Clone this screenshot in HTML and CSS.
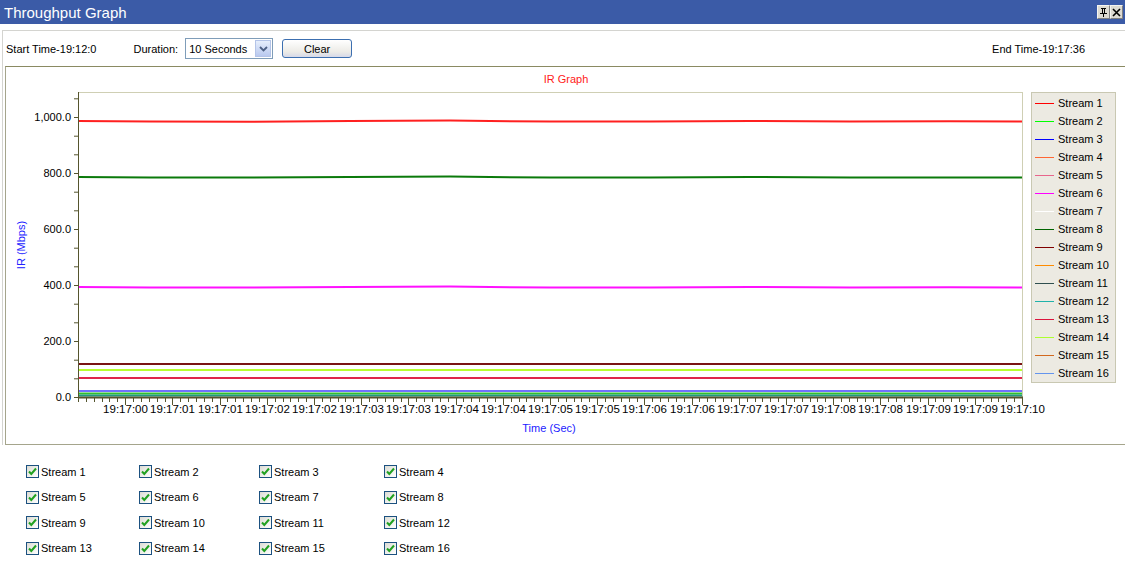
FILE: index.html
```html
<!DOCTYPE html>
<html lang="en">
<head>
    <meta charset="UTF-8">
    <title>Throughput Graph</title>
    <link rel="stylesheet" href="styles.css">
</head>
<body>
    <div class="titlebar">
        <span class="title">Throughput Graph</span>
        <div class="win-buttons">
            <span class="win-btn">
                <svg width="11" height="11" viewBox="0 0 11 11"><path d="M3 1h5v1H7v4h2v1H6v3H5V7H2V6h2V2H3z M5 2v4h1V2z" fill="#000"/></svg>
            </span>
            <span class="win-btn">
                <svg width="11" height="11" viewBox="0 0 11 11"><path d="M2 2L9 9M9 2L2 9" stroke="#000" stroke-width="1.6"/></svg>
            </span>
        </div>
    </div>

    <div class="panel">
        <div class="toolbar">
            <span class="start-time">Start Time-19:12:0</span>
            <span class="duration-label">Duration:</span>
            <div class="select">
                <span class="select-text">10 Seconds</span>
                <span class="select-arrow">
                    <svg width="9" height="6" viewBox="0 0 9 6"><path d="M1 1l3.5 3.5L8 1" stroke="#4d6185" stroke-width="1.8" fill="none"/></svg>
                </span>
            </div>
            <button class="clear-btn">Clear</button>
            <span class="end-time">End Time-19:17:36</span>
        </div>

        <div class="chart-panel">
            <svg class="chart" width="1119" height="377" viewBox="6 67 1119 377">
                <text x="566" y="83" class="chart-title" text-anchor="middle">IR Graph</text>

                <rect x="78.5" y="92.5" width="944" height="305" fill="#fff" stroke="#cfcfb4"/>

                <!-- data -->
                <g fill="none" stroke-width="2">
                    <polyline stroke="#ff2020" points="78,121 150,121.6 250,121.8 350,121 450,120.6 550,121.6 650,121.6 750,121 850,121.6 950,121.2 1022,121.6"/>
                    <polyline stroke="#0b7a0b" points="78,177 150,177.5 250,177.6 350,177 450,176.6 550,177.6 650,177.5 750,177 850,177.6 950,177.4 1022,177.6"/>
                    <polyline stroke="#ff10ff" points="78,287 150,287.6 250,287.6 350,287 450,286.6 550,287.6 650,287.6 750,287 850,287.6 950,287.2 1022,287.6"/>
                    <line x1="78" y1="364" x2="1022" y2="364" stroke="#7a1414"/>
                    <line x1="78" y1="370" x2="1022" y2="370" stroke="#b8ff30"/>
                    <line x1="78" y1="378" x2="1022" y2="378" stroke="#e0264a"/>
                    <line x1="78" y1="391" x2="1022" y2="391" stroke="#7070ff"/>
                    <line x1="78" y1="393.5" x2="1022" y2="393.5" stroke="#30c030"/>
                    <line x1="78" y1="395.5" x2="1022" y2="395.5" stroke="#209a80"/>
                </g>

                <!-- y axis -->
                <g stroke="#55552e" stroke-width="1">
                    <line x1="78.5" y1="92" x2="78.5" y2="398"/>
                    <line x1="74" y1="397.5" x2="78" y2="397.5"/>
                    <line x1="74" y1="378.8" x2="78" y2="378.8"/>
                    <line x1="74" y1="360.2" x2="78" y2="360.2"/>
                    <line x1="74" y1="341.5" x2="78" y2="341.5"/>
                    <line x1="74" y1="322.8" x2="78" y2="322.8"/>
                    <line x1="74" y1="304.2" x2="78" y2="304.2"/>
                    <line x1="74" y1="285.5" x2="78" y2="285.5"/>
                    <line x1="74" y1="266.8" x2="78" y2="266.8"/>
                    <line x1="74" y1="248.2" x2="78" y2="248.2"/>
                    <line x1="74" y1="229.5" x2="78" y2="229.5"/>
                    <line x1="74" y1="210.8" x2="78" y2="210.8"/>
                    <line x1="74" y1="192.2" x2="78" y2="192.2"/>
                    <line x1="74" y1="173.5" x2="78" y2="173.5"/>
                    <line x1="74" y1="154.8" x2="78" y2="154.8"/>
                    <line x1="74" y1="136.2" x2="78" y2="136.2"/>
                    <line x1="74" y1="117.5" x2="78" y2="117.5"/>
                    <line x1="74" y1="98.8" x2="78" y2="98.8"/>
                </g>
                <g class="axis-label" text-anchor="end">
                    <text x="71" y="401">0.0</text>
                    <text x="71" y="345">200.0</text>
                    <text x="71" y="289">400.0</text>
                    <text x="71" y="233">600.0</text>
                    <text x="71" y="177">800.0</text>
                    <text x="71" y="121">1,000.0</text>
                </g>
                <text class="axis-title" transform="translate(25 245) rotate(-90)" text-anchor="middle">IR (Mbps)</text>

                <!-- x axis -->
                <line x1="78" y1="397.5" x2="1023" y2="397.5" stroke="#55552e" stroke-width="2"/>
                <g id="xticks" stroke="#55552e" stroke-width="1"></g>
                <g id="xlabels" class="x-label" text-anchor="middle"></g>
                <text class="axis-title" x="549" y="432" text-anchor="middle">Time (Sec)</text>

                <!-- legend -->
                <rect x="1031.5" y="92.5" width="84" height="290" fill="#eceae2" stroke="#c9c8b2"/>
                <g id="legend" class="legend-text"></g>
            </svg>
        </div>
    </div>

    <div class="streams" id="streams"></div>

    <script>
        let legendColors = ["#ff0000", "#00ff00", "#0000ff", "#ff6633", "#e8668c", "#ff00ff", "#ffffff", "#006400",
            "#800000", "#ff8c00", "#2f4f4f", "#20b2aa", "#dc143c", "#adff2f", "#d2691e", "#6495ed"];
        let ns = "http://www.w3.org/2000/svg";

        // legend entries
        let legend = document.getElementById("legend");
        legendColors.forEach((c, i) => {
            let y = 103 + i * 18;
            let line = document.createElementNS(ns, "line");
            line.setAttribute("x1", 1035); line.setAttribute("x2", 1054);
            line.setAttribute("y1", y + 0.5); line.setAttribute("y2", y + 0.5);
            line.setAttribute("stroke", c);
            legend.appendChild(line);
            let t = document.createElementNS(ns, "text");
            t.setAttribute("x", 1058); t.setAttribute("y", y + 4);
            t.textContent = "Stream " + (i + 1);
            legend.appendChild(t);
        });

        // x ticks and labels
        let labels = ["19:17:00", "19:17:01", "19:17:01", "19:17:02", "19:17:02", "19:17:03", "19:17:03",
            "19:17:04", "19:17:04", "19:17:05", "19:17:05", "19:17:06", "19:17:06", "19:17:07", "19:17:07",
            "19:17:08", "19:17:08", "19:17:09", "19:17:09", "19:17:10"];
        let step = (1022 - 78) / 20;
        let ticks = document.getElementById("xticks");
        let xl = document.getElementById("xlabels");
        for (let k = 0; k <= 120; k++) {
            let x = Math.round(78 + k * step / 6) + 0.5;
            let major = k % 6 === 0 && k > 0;
            let l = document.createElementNS(ns, "line");
            l.setAttribute("x1", x); l.setAttribute("x2", x);
            l.setAttribute("y1", 398); l.setAttribute("y2", major ? 405 : 402);
            ticks.appendChild(l);
            if (major) {
                let t = document.createElementNS(ns, "text");
                t.setAttribute("x", x); t.setAttribute("y", 413);
                t.textContent = labels[k / 6 - 1];
                xl.appendChild(t);
            }
        }

        // stream checkboxes
        let streams = document.getElementById("streams");
        for (let i = 1; i <= 16; i++) {
            let item = document.createElement("label");
            item.className = "stream-item";
            item.innerHTML = `<span class="check"><svg width="11" height="11" viewBox="0 0 11 11"><path d="M2 5.5l2.3 2.5L9 2.5" stroke="#21a121" stroke-width="2" fill="none"/></svg></span>Stream ${i}`;
            streams.appendChild(item);
        }
    </script>
</body>
</html>
```

FILE: styles.css
```css
body {
    margin: 0;
    padding: 0;
    background: white;
    font-family: "Liberation Sans", Arial, sans-serif;
    font-size: 11px;
    color: black;
    width: 1125px;
    overflow: hidden;
}
.titlebar {
    height: 24px;
    background: #3b5ba7;
    display: flex;
    align-items: center;
    justify-content: space-between;
}
.title {
    color: white;
    font-size: 15px;
    padding-left: 4px;
}
.win-buttons {
    display: flex;
    gap: 0;
    padding-right: 2px;
}
.win-btn {
    width: 13px;
    height: 14px;
    background: #dcdad2;
    border: 1px solid #f4f4f0;
    border-right-color: #808080;
    border-bottom-color: #808080;
    display: flex;
    align-items: center;
    justify-content: center;
    box-sizing: border-box;
}
.panel {
    margin: 6px 0 0 2px;
    border-top: 1px solid #d4d4d0;
    border-left: 1px solid #d4d4d0;
}
.toolbar {
    height: 35px;
    display: flex;
    align-items: center;
    padding-left: 3px;
}
.duration-label {
    margin-left: 37px;
}
.select {
    margin-left: 7px;
    width: 88px;
    height: 21px;
    box-sizing: border-box;
    border: 1px solid #7f9db9;
    background: white;
    display: flex;
    align-items: center;
    justify-content: space-between;
}
.select-text {
    padding-left: 3px;
}
.select-arrow {
    width: 16px;
    height: 17px;
    margin-right: 1px;
    background: linear-gradient(to bottom, #e6eefc, #b9c9ef);
    border: 1px solid #b4c4e8;
    box-sizing: border-box;
    display: flex;
    align-items: center;
    justify-content: center;
}
.clear-btn {
    margin-left: 9px;
    width: 70px;
    height: 19px;
    padding: 0;
    font-family: "Liberation Sans", Arial, sans-serif;
    font-size: 11px;
    color: black;
    border: 1px solid #3c6fb0;
    border-radius: 3px;
    background: linear-gradient(to bottom, #ffffff, #ecebe6 70%, #d6d9e8);
}
.end-time {
    margin-left: auto;
    padding-right: 40px;
}
.chart-panel {
    margin-left: 2px;
    border-top: 1px solid #8a8a62;
    border-left: 1px solid #a5a58c;
    border-bottom: 1px solid #a5a58c;
    height: 377px;
}
.chart {
    display: block;
    font-family: "Liberation Sans", Arial, sans-serif;
}
.chart-title {
    fill: #ff1a1a;
    font-size: 11px;
}
.axis-label {
    font-size: 11px;
    fill: #000;
}
.x-label {
    font-size: 11.5px;
    fill: #000;
}
.axis-title {
    font-size: 11px;
    fill: #2222ff;
}
.legend-text {
    font-size: 11px;
    fill: #000;
}
.streams {
    display: grid;
    grid-template-columns: 113px 120px 125px 120px;
    grid-auto-rows: 25.5px;
    padding: 14px 0 0 26px;
}
.stream-item {
    display: flex;
    align-items: center;
    gap: 2px;
}
.check {
    width: 13px;
    height: 13px;
    box-sizing: border-box;
    border: 1px solid #1c5180;
    background: linear-gradient(135deg, #dcdcd4, #ffffff);
    display: flex;
    align-items: center;
    justify-content: center;
}
```
